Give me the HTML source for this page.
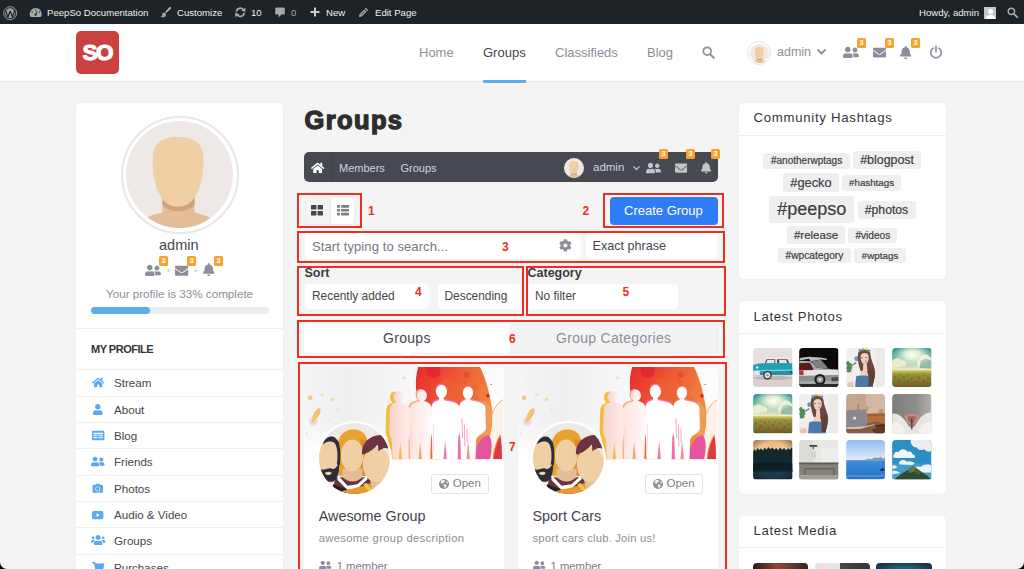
<!DOCTYPE html>
<html lang="en">
<head>
<meta charset="utf-8">
<title>Groups – PeepSo Documentation</title>
<style>
*{box-sizing:border-box;margin:0;padding:0}
html,body{width:1024px;height:569px;overflow:hidden;background:#f4f4f4;font-family:"Liberation Sans",sans-serif;color:#45454d}
#page{position:relative;width:1024px;height:569px;overflow:hidden;background:#f4f4f4}
.abs{position:absolute}
.t{position:absolute;white-space:nowrap;line-height:1}
svg{position:absolute;display:block;overflow:visible}

/* ---------- WP admin bar ---------- */
#wpbar{position:absolute;left:0;top:0;width:1024px;height:24px;background:#1d2327}
#wpbar .t{color:#f0f0f1;font-size:9.600px;top:8.200px}
#wpbar .dim{color:#a7aaad}

/* ---------- site header ---------- */
#hdr{position:absolute;left:0;top:24px;width:1024px;height:58px;background:#fff;border-bottom:1px solid #e6e6e6}
#logo{position:absolute;left:76px;top:7px;width:43px;height:43px;border-radius:5px;background:#cb4140}
#logo .t{color:#fff;font-weight:bold;font-size:22.500px;left:6.600px;top:10.700px;letter-spacing:-1.700px;-webkit-text-stroke:1.100px #fff}
.nav{color:#8e8e9a;font-size:13px;top:21.800px}
.nav.on{color:#45454d}
#navline{position:absolute;left:483px;top:56px;width:43px;height:3px;background:#5badf0;z-index:2}
.badge{position:absolute;width:9px;height:10px;border-radius:1.500px;background:#f6a32b;color:#fff;font-size:7.500px;line-height:10px;text-align:center;font-weight:bold}

/* ---------- cards ---------- */
.card{position:absolute;background:#fff;border-radius:5px;box-shadow:0 0 2px rgba(0,0,0,.04)}
.av{border-radius:50%;overflow:hidden;position:relative;width:100%;height:100%}
.av svg{position:absolute;left:0;top:0;width:100%;height:100%}
.hr{position:absolute;height:1px;background:#efefef}

/* ---------- left sidebar ---------- */
.menu{color:#45454d;font-size:11.600px;left:114px;margin-top:.8px}
.mi{fill:#5aa9ee}

/* ---------- main column ---------- */
#title{left:304.600px;top:108px;font-size:25.500px;font-weight:bold;color:#2d2d2d;letter-spacing:1.350px;-webkit-text-stroke:1.300px #2d2d2d}
#pbar{position:absolute;left:304px;top:152px;width:413.500px;height:30.300px;border-radius:5px;background:#46494f}
#pbar .t{color:#d4d4d9;font-size:11px;top:10.500px}
.rbox{position:absolute;border:2px solid #ee2e22}
.rnum{color:#ee2e22;font-weight:bold;font-size:12px}
.inp{position:absolute;background:#fff;border-radius:4px;height:25.500px}
.inp .t{left:7px;top:7.300px;font-size:11.900px;color:#45454d}
.lbl{font-weight:bold;font-size:12.500px;color:#3a3a42}

.gcard{position:absolute;top:367px;width:199.500px;height:220px;background:#fff;border-radius:5px 5px 0 0;overflow:hidden}
.gcard .cv{left:0;top:0;width:199.500px;height:92.300px}
.gav{position:absolute;top:421.100px;width:75.300px;height:75.300px;border-radius:50%;background:#fff;padding:2px}
.open{position:absolute;top:473.700px;width:58.500px;height:20.600px;border:1px solid #e4e4e4;border-radius:3px;background:#fff}
.open .t{left:21px;top:3.500px;font-size:11.500px;color:#808088}
.gname{font-size:14.400px;color:#45454d;top:508.500px}
.gdesc{font-size:11.300px;letter-spacing:.3px;color:#8e8e98;top:532.800px}
.gmem{font-size:11.300px;color:#7a7a84;top:561px}

/* ---------- right sidebar ---------- */
.wtitle{font-size:13.200px;letter-spacing:.66px;color:#33333b;left:753.500px}
.tag{position:absolute;background:#efefef;border-radius:3px;color:#3c3c44;text-align:center;white-space:nowrap;-webkit-text-stroke:.2px #3c3c44}
.ph{position:absolute;width:39.600px;height:39.400px;border-radius:4px;overflow:hidden}
.ph svg{left:0;top:0;width:100%;height:100%}
</style>
</head>
<body>
<div id="page">
<svg width="0" height="0" style="left:-10px;top:-10px"><defs>
<symbol id="i-friends" viewBox="0 0 640 512"><path d="M192 256c61.900 0 112-50.100 112-112S253.900 32 192 32 80 82.100 80 144s50.100 112 112 112zm76.800 32h-8.300c-20.800 10-43.900 16-68.500 16s-47.600-6-68.500-16h-8.300C51.600 288 0 339.600 0 403.200V432c0 26.500 21.500 48 48 48h288c26.500 0 48-21.500 48-48v-28.800c0-63.600-51.600-115.200-115.200-115.200zM480 256c53 0 96-43 96-96s-43-96-96-96-96 43-96 96 43 96 96 96zm48 32h-3.800c-13.900 4.800-28.600 8-44.200 8s-30.300-3.200-44.200-8H432c-20.400 0-39.200 5.900-55.700 15.400 24.400 26.300 39.700 61.200 39.700 99.800v38.400c0 2.200-.5 4.300-.6 6.400H592c26.500 0 48-21.500 48-48 0-61.900-50.100-112-112-112z"/></symbol>
<symbol id="i-mail" viewBox="0 0 512 512"><path d="M502.300 190.800c3.900-3.100 9.700-.2 9.700 4.700V400c0 26.500-21.500 48-48 48H48c-26.500 0-48-21.500-48-48V195.600c0-5 5.700-7.800 9.700-4.700 22.400 17.400 52.100 39.500 154.100 113.600 21.100 15.400 56.700 47.800 92.200 47.600 35.700.3 72-32.800 92.300-47.600 102-74.100 131.600-96.300 154-113.700zM256 320c23.200.4 56.600-29.200 73.400-41.400 132.700-96.300 142.800-104.700 173.400-128.700 5.800-4.500 9.200-11.500 9.200-18.900v-19c0-26.500-21.500-48-48-48H48C21.500 64 0 85.500 0 112v19c0 7.400 3.400 14.300 9.200 18.900 30.600 23.900 40.700 32.400 173.400 128.700 16.800 12.200 50.200 41.800 73.400 41.400z"/></symbol>
<symbol id="i-bell" viewBox="0 0 448 512"><path d="M224 512c35.300 0 64-28.700 64-64H160c0 35.300 28.700 64 64 64zm215.400-149.700c-19.300-20.800-55.500-52-55.500-154.300 0-77.700-54.500-139.900-127.900-155.200V32c0-17.700-14.300-32-32-32s-32 14.300-32 32v20.800C118.600 68.100 64.100 130.300 64.100 208c0 102.300-36.200 133.500-55.500 154.300-6 6.400-8.700 14.100-8.600 21.700.1 16.400 13 32 32.100 32h383.800c19.100 0 32-15.600 32.100-32 .1-7.600-2.600-15.300-8.600-21.700z"/></symbol>
<symbol id="i-home" viewBox="0 0 576 512"><path d="M280.400 148.300L96 300.100V464a16 16 0 0 0 16 16l112.100-.3a16 16 0 0 0 15.900-16V368a16 16 0 0 1 16-16h64a16 16 0 0 1 16 16v95.600a16 16 0 0 0 16 16.100L464 480a16 16 0 0 0 16-16V300L295.700 148.300a12.200 12.200 0 0 0-15.300 0zM571.600 251.500L488 182.600V44a12 12 0 0 0-12-12h-56a12 12 0 0 0-12 12v72.600L318.500 43a48 48 0 0 0-61 0L4.300 251.500a12 12 0 0 0-1.600 16.900l25.500 31a12 12 0 0 0 16.900 1.600l235.200-193.700a12.200 12.200 0 0 1 15.300 0L530.900 301a12 12 0 0 0 16.900-1.600l25.500-31a12 12 0 0 0-1.700-16.900z"/></symbol>
<symbol id="i-face" viewBox="0 0 100 100"><rect width="100" height="100" fill="#eee9e7"/><path d="M8,100 C13,92 22,88.500 34,85.500 L34,72 L64,72 L64,85.500 C76,88.500 85,92 90,100z" fill="#e3bd98"/><path d="M34,68 L64,68 L64,78 C58,86.500 40,86.500 34,78z" fill="#cfa37d"/><path d="M48.500,15 C64,15 72.500,21 72.500,36 C72.500,54 69,65 63,73 C59,78.500 53,80 48.500,80 C44,80 38,78.500 34,73 C28,65 25,54 25,36 C25,21 33,15 48.500,15z" fill="#f1cfa5"/></symbol>
<symbol id="g-cover" viewBox="0 0 200 93" preserveAspectRatio="none">
<defs>
<linearGradient id="cv-bg" x1="0" y1="0" x2="1" y2="0"><stop offset="0" stop-color="#f5f5f6"/><stop offset=".22" stop-color="#efeff1"/><stop offset=".5" stop-color="#f7f7f8"/><stop offset="1" stop-color="#fcfcfd"/></linearGradient>
<linearGradient id="cv-fade" x1="0" y1="0" x2="0" y2="1"><stop offset=".55" stop-color="#fff" stop-opacity="0"/><stop offset="1" stop-color="#fff" stop-opacity=".95"/></linearGradient>
<linearGradient id="cv-sun" x1="0" y1="0" x2="1" y2=".6"><stop offset="0" stop-color="#e9292f"/><stop offset=".45" stop-color="#ee5a34"/><stop offset="1" stop-color="#f29340"/></linearGradient>
<linearGradient id="cv-p1" x1="0" y1="0" x2="1" y2="0"><stop offset="0" stop-color="#f9d3cd"/><stop offset="1" stop-color="#fdeeea"/></linearGradient>
<linearGradient id="cv-p2" x1="0" y1="0" x2="1" y2="0"><stop offset="0" stop-color="#fbe3de"/><stop offset="1" stop-color="#fffafa"/></linearGradient>
</defs>
<rect width="200" height="93" fill="url(#cv-bg)"/>
<rect width="112" height="93" fill="url(#cv-fade)"/>
<!-- dots & comet -->
<circle cx="6.200" cy="31" r="2.500" fill="#f4c98a"/><circle cx="18.300" cy="28" r="1.300" fill="#f6d7a4"/><circle cx="28.500" cy="32.600" r="1.800" fill="#f6d3a0"/><circle cx="34" cy="42.500" r="1" fill="#f6d7a4"/><circle cx="9.600" cy="16.400" r=".8" fill="#f8e2bf"/><circle cx="100" cy="10.800" r="1.700" fill="#f3dccb"/>
<circle cx="9.300" cy="55" r="4.300" fill="#eadbe6"/><path d="M7.800,57 C7.600,49 11,42.500 15.200,41.200 C18.600,42.600 16.500,49.500 7.800,57z" fill="#f6c073"/>
<circle cx="25" cy="54" r="1" fill="#eedfe9"/><circle cx="2.600" cy="67.300" r="1.200" fill="#efe3ea"/>
<!-- sun blob -->
<path d="M114.500,0 C110.500,13 111.500,30 118,44 L118,93 L189,93 L189,46 C187,30 183,13 176.500,0 Z" fill="url(#cv-sun)"/>
<circle cx="130" cy="4" r="7" fill="#e2232b" opacity=".75"/><circle cx="163" cy="8" r="3" fill="#e8452f" opacity=".8"/><circle cx="171.500" cy="20" r="3.600" fill="#ea6a33" opacity=".7"/><circle cx="161.500" cy="14.500" r="2.600" fill="#ea5a30" opacity=".7"/>
<path d="M138,12 C148,9 154,20 164,23 C172,25 178,32 182,44 L146,44z" fill="#ee6436" opacity=".5"/>
<!-- right-side shapes -->
<path d="M180,93 L180,34 C184,36 187,40 189,46 L188.500,60 L186,72 L184,93z" fill="#f19a52"/>
<path d="M189,46 C191.500,39 195.500,34.500 200,32.500 L200,93 L186,93 L186,72 L188.500,60z" fill="#fdf2e8"/>
<path d="M188.800,47 C191.500,39.500 195.500,35 200,33" stroke="#f3a866" stroke-width=".9" fill="none"/>
<circle cx="184.300" cy="29" r="1.700" fill="#d3222c"/><circle cx="187.600" cy="17.500" r=".7" fill="#b0207a"/><circle cx="181" cy="6" r=".9" fill="#f2d8d8"/>
<path d="M171,93 C170,83 176,71 184.500,68.500 C189.500,72 188.500,84 186.500,93z" fill="#e4559e"/>
<path d="M189.500,93 C190.500,82 193.500,74 196.800,68.500 C198.200,76 198.600,86 198.400,93z" fill="#dc3a3e"/><path d="M189.500,93 C190.500,82 193.500,74 196.800,68.500" stroke="#f0913f" stroke-width="1.100" fill="none"/>
<!-- pink / yellow outlines behind people -->
<g transform="translate(-3.6,0.4)"><ellipse cx="94.7" cy="30.2" rx="5.0" ry="5.9" fill="#f4bb3e"/><path d="M92.6,34.4 L92.3,35.8 C89.2,36.8 87.0,37.2 86.0,42.9 L85.4,64.4 C85.8,69.4 88.2,71.4 88.2,76.4 L88.8,94 L104.2,94 L104.8,76.4 C104.8,71.4 106.4,69.4 106.8,64.4 L106.2,42.9 C105.2,37.2 100.2,36.8 97.1,35.8 L96.8,34.4 Z" fill="#f4bb3e"/></g><g transform="translate(-1.4,-1.0)"><ellipse cx="118.2" cy="28.7" rx="5.0" ry="5.9" fill="#f2a57c"/><path d="M116.1,32.9 L115.8,34.6 C112.7,35.6 107.0,36.0 106.0,41.7 L105.4,63.2 C105.8,68.2 105.8,70.2 105.8,75.2 L106.4,94 L126.6,94 L127.2,75.2 C127.2,70.2 128.2,68.2 128.6,63.2 L128.0,41.7 C127.0,36.0 123.7,35.6 120.6,34.6 L120.3,32.9 Z" fill="#f2a57c"/></g><g transform="translate(-0.4,-1.5)"><ellipse cx="137.8" cy="24.8" rx="5.6" ry="6.7" fill="#ea78a8"/><path d="M135.7,29.6 L135.4,33.4 C132.3,34.4 128.8,34.8 127.8,40.5 L127.2,62.0 C127.6,67.0 128.4,69.0 128.4,74.0 L129.0,94 L154.0,94 L154.6,74.0 C154.6,69.0 156.2,67.0 156.6,62.0 L156.0,40.5 C155.0,34.8 143.3,34.4 140.2,33.4 L139.9,29.6 Z" fill="#ea78a8"/></g><g transform="translate(0.5,-1.1)"><ellipse cx="164.3" cy="26.1" rx="5.1" ry="6.1" fill="#f08d8f"/><path d="M162.2,30.4 L161.9,33.4 C158.8,34.4 156.6,34.8 155.6,40.5 L155.0,62.0 C155.4,67.0 156.8,69.0 156.8,74.0 L157.4,94 L171.8,94 L172.4,74.0 C172.4,69.0 182.0,67.0 182.4,62.0 L181.8,40.5 C180.8,34.8 169.8,34.4 166.7,33.4 L166.4,30.4 Z" fill="#f08d8f"/></g>
<path d="M128,94 L129,72 L134,66 L136,94z" fill="#f3a04e"/><path d="M153,94 L154,58 L160,56 L161,94z" fill="#ec6fa5"/>
<ellipse cx="94.7" cy="30.2" rx="5.0" ry="5.9" fill="url(#cv-p1)"/><path d="M92.6,34.4 L92.3,35.8 C89.2,36.8 87.0,37.2 86.0,42.9 L85.4,64.4 C85.8,69.4 88.2,71.4 88.2,76.4 L88.8,94 L94.7,94 L96.5,76.4 L98.3,94 L104.2,94 L104.8,76.4 C104.8,71.4 106.4,69.4 106.8,64.4 L106.2,42.9 C105.2,37.2 100.2,36.8 97.1,35.8 L96.8,34.4 Z" fill="url(#cv-p1)"/><ellipse cx="118.2" cy="28.7" rx="5.0" ry="5.9" fill="url(#cv-p2)"/><path d="M116.1,32.9 L115.8,34.6 C112.7,35.6 107.0,36.0 106.0,41.7 L105.4,63.2 C105.8,68.2 105.8,70.2 105.8,75.2 L106.4,94 L114.7,94 L116.5,75.2 L118.3,94 L126.6,94 L127.2,75.2 C127.2,70.2 128.2,68.2 128.6,63.2 L128.0,41.7 C127.0,36.0 123.7,35.6 120.6,34.6 L120.3,32.9 Z" fill="url(#cv-p2)"/><ellipse cx="137.8" cy="24.8" rx="5.6" ry="6.7" fill="#fff"/><path d="M135.7,29.6 L135.4,33.4 C132.3,34.4 128.8,34.8 127.8,40.5 L127.2,62.0 C127.6,67.0 128.4,69.0 128.4,74.0 L129.0,94 L139.7,94 L141.5,74.0 L143.3,94 L154.0,94 L154.6,74.0 C154.6,69.0 156.2,67.0 156.6,62.0 L156.0,40.5 C155.0,34.8 143.3,34.4 140.2,33.4 L139.9,29.6 Z" fill="#fff"/><ellipse cx="164.3" cy="26.1" rx="5.1" ry="6.1" fill="#fff"/><path d="M162.2,30.4 L161.9,33.4 C158.8,34.4 156.6,34.8 155.6,40.5 L155.0,62.0 C155.4,67.0 156.8,69.0 156.8,74.0 L157.4,94 L162.8,94 L164.6,74.0 L166.4,94 L171.8,94 L172.4,74.0 C172.4,69.0 182.0,67.0 182.4,62.0 L181.8,40.5 C180.8,34.8 169.8,34.4 166.7,33.4 L166.4,30.4 Z" fill="#fff"/>
<path d="M158.200,52 L159,72 M160.800,58 L161.300,80 M163.400,62 L163.600,76" stroke="#ee7fa6" stroke-width=".7" fill="none"/>
<path d="M107.200,60 L107.600,80 M129.600,58 L130,84" stroke="#f6c6b8" stroke-width=".6" fill="none"/>
</symbol>
<symbol id="g-avatar" viewBox="0 0 100 100">
<rect width="100" height="100" fill="#eee9e7"/>
<!-- centre person hair back -->
<path d="M26,40 C24,18 36,9 48,9 C60,9 70,16 69,36 L70,74 L26,74z" fill="#e8a02e"/>
<path d="M58,22 L69,26 L70,74 L60,74z" fill="#dc8a2b"/>
<!-- clothes -->
<path d="M22,76 L72,76 L74,100 L20,100z" fill="#6e3340"/>
<path d="M20,86 L42,94 L38,100 L14,100z" fill="#23232b"/>
<path d="M26,73 L40,88 L54,86 L68,73 L68,79 L54,92 L40,94 L26,80z" fill="#fff"/>
<path d="M30,96 C45,92 60,90 72,84 L84,100 L30,100z" fill="#ea9a2c"/><path d="M62,86 L67,84 L76,96 L71,98z" fill="#f5c842"/>
<!-- centre neck + face -->
<path d="M33,64 L61,64 L61,76 C52,84 42,84 33,76z" fill="#e3bd98"/>
<ellipse cx="46.500" cy="45.500" rx="15.800" ry="22.500" fill="#f1cfa5"/>
<!-- left person -->
<path d="M0,28 L24,26 C30,34 30,58 27,66 L22,80 L0,80z" fill="#f1cfa5"/>
<path d="M10,84 L24,76 L22,66 L4,70z" fill="#dcb590"/>
<path d="M6,28 C10,18 22,14 28,28 C31,40 30,52 29,60 L25,58 C27,46 26,34 22,28 C16,24 10,26 6,30z" fill="#2b2d3a"/>
<path d="M2,64 C8,68 12,62 18,64 C22,66 26,60 28,56 C29,68 26,78 20,82 C12,84 6,78 2,70z" fill="#2b2d3a"/>
<path d="M8,70 C12,68 16,68 18,70 C16,74 10,74 8,70z" fill="#f1cfa5"/>
<!-- right person -->
<path d="M72,78 L90,78 L90,96 L74,94z" fill="#e3bd98"/>
<ellipse cx="80.500" cy="58" rx="19" ry="25" fill="#f1cfa5"/>
<path d="M60,44 C60,28 70,18 86,17 C92,18 96,26 97,36 C92,34 88,36 83,40 C84,34 82,30 82,30 C76,38 68,42 62,44z" fill="#6e3340"/>
</symbol>
<symbol id="ph-car1" viewBox="0 0 40 40"><rect width="40" height="40" fill="#e7dfde"/><rect y="27.500" width="40" height="12.500" fill="#d9d1d1"/>
<ellipse cx="20" cy="30.500" rx="20" ry="2" fill="#bdb4b4"/>
<path d="M10.500,15.800 C11.500,11 13,9.800 16,9.700 L33,9.700 C36,9.900 37.500,12 38.500,15.800z" fill="#f1ece2"/>
<path d="M11.800,15.700 L13.400,11.300 L22.600,11.300 L22.600,15.700z M24.200,11.300 L35,11.300 L37,15.700 L24.200,15.700z" fill="#4a5254"/><path d="M13.300,15.200 L14.400,12.200 L21.600,12.200 L21.600,15.200z M26.500,12.200 L33.500,12.200 L34.800,15.200 L26.500,15.200z" fill="#dfe7e6"/>
<path d="M0,17.200 C3,15.800 8,15.500 12,15.500 L40,15.500 L40,27.200 L0,27.600z" fill="#1f9fb6"/>
<path d="M0,22.600 L40,21.800 L40,23.200 L0,24z" fill="#7fd0dc"/><path d="M0,24 L40,23.200 L40,27.200 L0,27.600z" fill="#2a8da2"/>
<path d="M0,23.500 L6.500,23.200 L7,27.600 L0,28z" fill="#e8e8ea"/><circle cx="4.200" cy="19.800" r="1.300" fill="#f4f4f0"/>
<circle cx="14.600" cy="27.600" r="4.300" fill="#2e2a2b"/><circle cx="14.600" cy="27.600" r="3" fill="#e6e2e0"/><circle cx="14.600" cy="27.600" r="1.300" fill="#9a9696"/>
<path d="M36,24 A4.300,4.300 0 0 1 40,27.500 L40,24z" fill="#2e2a2b"/></symbol>
<symbol id="ph-car2" viewBox="0 0 40 40"><rect width="40" height="40" fill="#0b0b0c"/>
<path d="M0,12 L1.500,10 L10,8.800 L22,9.600 L28.500,10.800 L28,12.200 L22,11.600 L12,13.500 L10,10.800 L2,12.500z" fill="#b9bbbb"/>
<path d="M0,13 L12,13.500 L18,20 L40,22 L40,37 L0,37z" fill="#a9abab"/>
<path d="M0,15.500 L11,15 L14.500,21 L12.500,27 L0,27z" fill="#5a1c1a"/><path d="M13,13.500 L22,11.600 L30,21 L17,20z" fill="#7b7f80"/>
<path d="M0,22.500 L40,22 L40,27.500 L0,28.500z" fill="#e3e5e5"/><rect x="0" y="22.800" width="4.500" height="4.800" fill="#b8302a"/>
<path d="M0,28.500 L40,27.500 L40,33 L0,34z" fill="#8d9090"/>
<circle cx="21.200" cy="32" r="5.600" fill="#1c1c1e"/><circle cx="21.200" cy="32" r="3.400" fill="#9b9d9d"/><circle cx="21.200" cy="32" r="1.400" fill="#d5d5d5"/>
<path d="M33,30 L40,29.500 L40,33.500 L33,34z" fill="#4a4c4c"/>
<rect y="36.500" width="40" height="3.500" fill="#2a2a2b"/></symbol>
<symbol id="ph-girl" viewBox="0 0 40 40"><rect width="40" height="40" fill="#f0efed"/><rect x="30" width="10" height="40" fill="#ebeae8"/>
<path d="M.5,14 C2,12.500 3.500,13.500 3.500,15.500 C5,14.500 6.500,15.500 5.500,17.500 L9.500,14.500 C10.500,14.300 10.800,15.500 10,16 L5.500,18.500 C7,19.500 6.500,21.500 5,21.500 C6,23 5,25 3.200,24.500 C1.500,25.500 0,24 1,22 C-.5,20.500 0,18.500 1.500,18.500 C0,17 -.3,15 .5,14z" fill="#4f8a5e"/>
<circle cx="10.800" cy="11" r="2.500" fill="#6f92d2"/>
<path d="M0,40 C0,32 3,25.500 10,24.500 L12,40z" fill="#f3ece8"/><path d="M.5,40 L1.500,35 L7,34.500 L8,40z" fill="#e6c6b6"/>
<path d="M12,9 C11.500,3 15,1 18.500,1.200 C22.500,1 24.800,3.500 25,8 C25.500,13 29.500,19 29.500,25 C29.500,31 27.500,36 26.500,38.500 L22,38.500 C23,33 22,27 21,23 L15,23.500 C13.500,21 11.800,14 12,9z" fill="#6b4a3d"/>
<path d="M14.700,9 C14.700,6.200 16.500,5 18.800,5 C21.300,5 23,6.500 23,9.500 C23,13.500 21.200,16.600 18.800,16.600 C16.500,16.600 14.700,13 14.700,9z" fill="#edd1c5"/>
<path d="M19.200,13.300 C19.900,12.900 20.800,12.900 21.400,13.400 C20.800,14.300 19.800,14.300 19.200,13.300z" fill="#d6405a"/>
<path d="M15.200,10 L17.200,9.600 M19.600,9.600 L21.700,10" stroke="#6b4a3d" stroke-width=".7"/>
<path d="M13,40 C12.500,32 14,25 17,22.500 L17.500,16 L21,16 L21.500,22 C24.500,24 25.500,29 25.500,40z" fill="#ecd0c2"/>
<path d="M9.200,40 C9.400,35 10,30.500 10.500,28.500 C14,27.500 22,27.800 25.500,29 C26.500,32 27,36 27.200,40z" fill="#4a79aa"/>
<path d="M21,23 C23,27 23.500,33 22.500,38.500 L26.800,38.500 C29,33 29.500,27 28,21z" fill="#5e4034"/>
<circle cx="14" cy="2.500" r="1.500" fill="#6c92cf"/><circle cx="17.200" cy="1.300" r="1.300" fill="#9db86a"/><circle cx="20.500" cy="1.300" r="1.300" fill="#e6d35a"/><circle cx="23.300" cy="2.800" r="1.400" fill="#6c92cf"/></symbol>
<symbol id="ph-field" viewBox="0 0 40 40"><defs><linearGradient id="fs" x1="0" y1="0" x2="0" y2="1"><stop offset="0" stop-color="#279390"/><stop offset=".32" stop-color="#7cc0ad"/><stop offset=".56" stop-color="#f4eec2"/></linearGradient><radialGradient id="fsun" cx=".52" cy=".28" r=".5"><stop offset="0" stop-color="#fffef2"/><stop offset=".35" stop-color="#fffbe0" stop-opacity=".85"/><stop offset="1" stop-color="#fffbe6" stop-opacity="0"/></radialGradient><linearGradient id="fg" x1="0" y1="0" x2="0" y2="1"><stop offset="0" stop-color="#d8cf72"/><stop offset=".2" stop-color="#9a9a3e"/><stop offset="1" stop-color="#55662a"/></linearGradient></defs>
<rect width="40" height="40" fill="url(#fs)"/>
<path d="M0,13 C3,9 8,10 10,13 C13,12 15,15 14,18 L0,20z" fill="#f3efcf" opacity=".9"/><path d="M27,12 C29,6 36,5 38,9 C40,9 40,12 40,13 L40,20 L26,19 C25,16 25,13 27,12z" fill="#eef0d6" opacity=".9"/>
<path d="M29,13 C33,10 38,11 40,14 L40,21 L28,20z" fill="#5f9f8a" opacity=".6"/>
<rect width="40" height="24" fill="url(#fsun)"/>
<rect y="22.500" width="40" height="17.500" fill="url(#fg)"/>
<g fill="#c83c28"><circle cx="3" cy="30" r="1.100"/><circle cx="7.500" cy="33" r="1.300"/><circle cx="12" cy="29.500" r="1"/><circle cx="15.500" cy="34.500" r="1.300"/><circle cx="20" cy="31" r="1.100"/><circle cx="24" cy="35" r="1.300"/><circle cx="27.500" cy="30" r="1"/><circle cx="32" cy="33.500" r="1.300"/><circle cx="36.500" cy="30.500" r="1.100"/><circle cx="5" cy="37" r="1.300"/><circle cx="11" cy="37.500" r="1.200"/><circle cx="19" cy="37.500" r="1.300"/><circle cx="29" cy="37.500" r="1.300"/><circle cx="36" cy="36.500" r="1.300"/><circle cx="23" cy="28.500" r=".8"/><circle cx="16" cy="28" r=".7"/><circle cx="33" cy="28" r=".8"/><circle cx="8" cy="28" r=".7"/></g></symbol>
<symbol id="ph-laptop" viewBox="0 0 40 40"><rect width="40" height="40" fill="#c6a48e"/><rect x="20" width="20" height="20" fill="#d4b8a4"/>
<rect x="11.500" y="10" width="1.800" height="6" fill="#8f8a86"/><rect x="20.500" y="12.500" width="2.200" height="5" fill="#c59a62"/><rect x="33" y="15.500" width="5" height="4" fill="#b89a78"/>
<path d="M21,20 L40,19.500 L40,23 L21,23z" fill="#9a5f36"/><path d="M21,23 L40,23 L40,30 L21,31z" fill="#b5703e"/>
<path d="M0,34 L30,28 L40,30 L40,40 L0,40z" fill="#8a5a3e"/><path d="M26,36 L40,31 L40,40 L30,40z" fill="#5e3a2a"/>
<path d="M0,16.500 L20.500,15.600 L21.300,32.500 L0,33.800z" fill="#8b8790"/><path d="M0,33.800 L21.300,32.500 L29,30.500 L28,31.800 L14,35.500 L0,35.500z" fill="#c3c1c6"/>
<circle cx="8.700" cy="24.600" r="1.500" fill="#e6e4ea"/><path d="M29.500,32 L38,30.500 L38.500,32 L30.500,33.800z" fill="#3a2a26"/></symbol>
<symbol id="ph-cat" viewBox="0 0 40 40"><defs><linearGradient id="ct" x1="0" y1="0" x2="1" y2="0"><stop offset="0" stop-color="#7f7d79"/><stop offset=".6" stop-color="#8f8d89"/><stop offset="1" stop-color="#b3b0ab"/></linearGradient></defs>
<rect width="40" height="40" fill="url(#ct)"/>
<path d="M0,20 C6,19 10,23 14,28 C16,32 18,34 20,34.500 C22,34 24,32 26,28 C30,22 35,18 40,19 L40,40 L0,40z" fill="#e9e5e0"/>
<path d="M0,30 C5,27 10,30 14,36 L12,40 L0,40z" fill="#f4f1ee"/><path d="M40,28 C35,27 30,31 27,37 L29,40 L40,40z" fill="#f4f1ee"/>
<path d="M12.500,22 C15,19.800 25,19.800 27.500,22 C27.500,26 24,30 20.500,31 L19.500,31 C16,30 12.500,26 12.500,22z" fill="#c98f78"/>
<path d="M15.500,23 C17.500,22 22.500,22 24.500,23 C24,26.500 22,29.500 20.500,30.200 L19.500,30.200 C18,29.500 16,26.500 15.500,23z" fill="#a8685a"/>
<path d="M19.300,25 L20.700,25 L20.500,36 L19.500,36z" fill="#4a3834"/></symbol>
<symbol id="ph-forest" viewBox="0 0 40 40"><defs><linearGradient id="fo" x1="0" y1="0" x2="0" y2="1"><stop offset="0" stop-color="#eeb277"/><stop offset=".22" stop-color="#f0c898"/><stop offset=".3" stop-color="#c9b79a"/></linearGradient><radialGradient id="fov" cx=".5" cy=".5" r=".75"><stop offset=".6" stop-color="#000" stop-opacity="0"/><stop offset="1" stop-color="#000" stop-opacity=".45"/></radialGradient></defs>
<rect width="40" height="40" fill="url(#fo)"/>
<path d="M0,12 L1.500,9.500 L3,11.500 L4.500,8 L6.500,10.500 L8,8.500 L10,11 L11.500,7.500 L13.500,10 L15.500,7 L17.500,9.500 L19.500,7.500 L21.500,10 L23.500,8 L25.500,10.500 L27.500,7.500 L29.500,10 L31.500,8 L33.500,10.500 L35.500,8.500 L37.500,10 L39,7.500 L40,9 L40,32 L0,32z" fill="#12292d"/>
<path d="M0,24 C10,22 30,22 40,24 L40,32 L0,32z" fill="#0d1f24"/>
<rect y="30.500" width="40" height="9.500" fill="#1b3a4a"/><rect y="30.500" width="40" height="2" fill="#142c36"/>
<rect width="40" height="40" fill="url(#fov)"/></symbol>
<symbol id="ph-wall" viewBox="0 0 40 40"><rect width="40" height="40" fill="#e7e7e6"/><rect x="0" y="0" width="14" height="23" fill="#dcdcdb"/><rect x="22" y="8" width="18" height="15" fill="#ededec"/>
<rect x="10.500" y="5" width="8" height="1.800" rx=".5" fill="#3c3c3c"/><rect x="13.800" y="6.800" width="1.300" height="2.500" fill="#5a5a5a"/><rect x="12" y="12" width="5" height="6" fill="#d2d2d1"/>
<rect y="23" width="40" height="17" fill="#858079"/><rect y="23" width="40" height="1.600" fill="#5e5a55"/>
<rect x="5" y="28.500" width="31" height="1.300" fill="#625e59"/><rect x="5" y="29.800" width="1.300" height="6" fill="#625e59"/><rect x="34.700" y="29.800" width="1.300" height="6" fill="#625e59"/>
<rect y="35.500" width="40" height="4.500" fill="#a29d96"/></symbol>
<symbol id="ph-sea" viewBox="0 0 40 40"><defs><linearGradient id="se1" x1="0" y1="0" x2="0" y2="1"><stop offset="0" stop-color="#8fbcf0"/><stop offset="1" stop-color="#e4eefa"/></linearGradient><linearGradient id="se2" x1="0" y1="0" x2="0" y2="1"><stop offset="0" stop-color="#3f8edb"/><stop offset="1" stop-color="#2670c4"/></linearGradient></defs>
<rect width="40" height="21" fill="url(#se1)"/><rect y="20.500" width="40" height="19.500" fill="url(#se2)"/>
<path d="M0,20.500 L18,20.500 L22,19 L26,19.300 L29,17.800 L33,18.200 L35,17 L36.500,18.500 L40,18.300 L40,21 L0,21z" fill="#8696ad"/>
<path d="M0,36 C10,34.500 30,37 40,35 L40,37 C30,39 10,36.500 0,38z" fill="#5a9be0" opacity=".7"/>
<path d="M34.500,29.500 L39,29.500 L38.500,31.300 L35,31.300z M36.500,28 L37.500,28 L37.500,29.500 L36.500,29.500z" fill="#16253d"/></symbol>
<symbol id="ph-sky" viewBox="0 0 40 40"><rect width="40" height="40" fill="#2a8fc2"/><rect y="24" width="40" height="16" fill="#5aa9cf" opacity=".6"/>
<path d="M19,0 L40,0 L40,11 C37,13 34,11.500 33,9.500 C30,11 26,10 25,7.500 C21,8 18.500,4 19,0z" fill="#e9eef3"/>
<path d="M2,15 C2,12 5,11.500 6.500,12.500 C8,8.500 14,8.500 15.500,12 C18,11 21,12.500 21,15 C23.500,15 24.500,17.500 22,18.200 L3,18.200 C0.500,18 0.500,15.500 2,15z" fill="#f4f7f9"/>
<path d="M8,21.500 C10,19.500 14,20 15,22 C18,21 22,22 23,24 L20,25.500 L9,25 C6.500,24.500 6.500,22.500 8,21.500z" fill="#eef2f5"/>
<path d="M22,30 C23,27 27,26 29,27.500 C31,24.500 37,24 40,26 L40,33 L24,33 C21.500,33 21,31 22,30z" fill="#f1f4f7"/>
<path d="M0,26 C2.500,25 5,26.500 5,28.500 L0,29.500z M0,31.500 C3,30.500 7,31.500 8,33.500 L0,35z" fill="#e8eef2"/>
<path d="M2,40 L10,34 L16,30.500 L21,26.500 L25,29 L30,32.500 L36,36.500 L40,40z" fill="#2f4a2e"/><path d="M16,30.500 L21,26.500 L25,29 L22,32 L18,33.500z" fill="#5f7a45"/><path d="M22,32 L25,29 L30,32.500 L27,36z" fill="#41603a"/></symbol>
</defs></svg>

<!-- ================= WP ADMIN BAR ================= -->
<div id="wpbar">
  <svg style="left:3px;top:5.500px" width="14.400" height="14.400" viewBox="0 0 20 20"><circle cx="10" cy="10" r="9" fill="none" stroke="#9ca1a7" stroke-width="1.300"/><circle cx="10" cy="10" r="7" fill="#9ca1a7"/><path d="M3.800 6.800l3.100 8.600 2.300-6.400 .8-2.200m0 0l3.100 8.600 2.600-7.400c.3-1 .2-1.700-.2-2.300" fill="none" stroke="#1d2327" stroke-width="1.700" stroke-linejoin="round"/></svg>
  <svg style="left:28.500px;top:5.500px" width="13.400" height="13.400" viewBox="0 0 20 20"><path d="M10 3a9 9 0 0 0-9 9c0 1.6.4 3.100 1.200 4.400h15.600A9 9 0 0 0 10 3zm0 2.200a1 1 0 1 1 0 2 1 1 0 0 1 0-2zM4.500 8a1 1 0 1 1 0 2 1 1 0 0 1 0-2zm11 0a1 1 0 1 1 0 2 1 1 0 0 1 0-2zm-2.300-1.700l-2 5.500a1.700 1.700 0 1 1-1.600-.6z" fill="#a7aaad"/></svg>
  <span class="t" style="left:47px">PeepSo Documentation</span>
  <svg style="left:160px;top:6px" width="12" height="12" viewBox="0 0 20 20"><path d="M18.300 1.700c-.7-.7-2-.5-3 .5l-7 7.600 2 2 7.500-7c1-1 1.200-2.400.5-3.100zM6.900 11c-1.700 0-3 1.300-3 3 0 1.700-1.400 3-2.900 3.400 1.200 1 2.700 1.400 4.300 1.400 2.700 0 4.600-2 4.600-4.600 0-1.700-1.300-3.200-3-3.200z" fill="#a7aaad"/></svg>
  <span class="t" style="left:177px">Customize</span>
  <svg style="left:234px;top:6.200px" width="12.600" height="12.600" viewBox="0 0 20 20"><path d="M3.800,9 A6.300,6.300 0 0 1 15,6" stroke="#a7aaad" stroke-width="2.700" fill="none"/><path d="M18.300,2.600 L18,9.600 L11.600,7z" fill="#a7aaad"/><path d="M16.200,11 A6.300,6.300 0 0 1 5,14" stroke="#a7aaad" stroke-width="2.700" fill="none"/><path d="M1.700,17.400 L2,10.400 L8.400,13z" fill="#a7aaad"/></svg>
  <span class="t" style="left:251px">10</span>
  <svg style="left:275px;top:7px" width="10" height="11" viewBox="0 0 20 22"><path d="M2 1h16a1.500 1.500 0 0 1 1.500 1.500v11A1.500 1.500 0 0 1 18 15h-5l-6 6v-6H2A1.500 1.500 0 0 1 .5 13.500v-11A1.500 1.500 0 0 1 2 1z" fill="#a7aaad"/></svg>
  <span class="t dim" style="left:291px">0</span>
  <svg style="left:310px;top:7px" width="10" height="10" viewBox="0 0 20 20"><path d="M8 1h4v7h7v4h-7v7H8v-7H1V8h7z" fill="#c8cacd"/></svg>
  <span class="t" style="left:326px">New</span>
  <svg style="left:358px;top:6.500px" width="11" height="11" viewBox="0 0 20 20"><path d="M14.300,1.500 L18.500,5.700 L16.600,7.600 L12.400,3.400z M11.300,4.500 L15.500,8.700 L6.800,17.400 L1.600,18.400 L2.600,13.200z" fill="#a7aaad"/><path d="M5,13.500 L11.300,7.200 L12.800,8.700 L6.500,15z" fill="#1d2327" opacity=".55"/></svg>
  <span class="t" style="left:375px">Edit Page</span>
  <span class="t" style="left:919px">Howdy, admin</span>
  <div class="abs" style="left:984px;top:7px;width:12px;height:12px;background:#c6c6c6;overflow:hidden"><div class="abs" style="left:3.500px;top:2px;width:5px;height:5px;border-radius:50%;background:#fff"></div><div class="abs" style="left:1.500px;top:7.500px;width:9px;height:8px;border-radius:4px 4px 0 0;background:#fff"></div></div>
  <svg style="left:1007px;top:7px" width="11" height="11" viewBox="0 0 20 20"><circle cx="8" cy="8" r="5.800" fill="none" stroke="#a7aaad" stroke-width="2.800"/><path d="M12.500 12.500l6 6" stroke="#a7aaad" stroke-width="3.200" stroke-linecap="round"/></svg>
</div>

<!-- ================= SITE HEADER ================= -->
<div id="hdr">
  <div id="logo"><span class="t">SO</span></div>
  <span class="t nav" style="left:419px">Home</span>
  <span class="t nav on" style="left:483px">Groups</span>
  <span class="t nav" style="left:555px">Classifieds</span>
  <span class="t nav" style="left:647px">Blog</span>
  <div id="navline"></div>
</div>

<!-- header right cluster -->
<svg style="left:702px;top:46px" width="13" height="13" viewBox="0 0 20 20"><circle cx="8" cy="8" r="6" fill="none" stroke="#8e8e9a" stroke-width="2.600"/><path d="M12.600 12.600l5.600 5.600" stroke="#8e8e9a" stroke-width="3" stroke-linecap="round"/></svg>
<div class="abs" style="left:747px;top:41px;width:24px;height:24px;border-radius:50%;border:1px solid #e4e4e4;background:#fff;padding:1.500px"><div class="av"><svg viewBox="0 0 100 100"><use href="#i-face"/></svg></div></div>
<span class="t" style="left:777px;top:46px;font-size:12.500px;color:#8e8e9a">admin</span>
<svg style="left:817px;top:49px" width="9" height="6" viewBox="0 0 9 6"><path d="M1 1l3.500 3.500L8 1" fill="none" stroke="#8e8e9a" stroke-width="1.800" stroke-linecap="round" stroke-linejoin="round"/></svg>
<svg style="left:843px;top:46px" width="16" height="12.800" fill="#8e8e9a"><use href="#i-friends"/></svg><div class="badge" style="left:857px;top:38px">3</div>
<svg style="left:873px;top:46px" width="13" height="13" fill="#8e8e9a"><use href="#i-mail"/></svg><div class="badge" style="left:885px;top:38px">3</div>
<svg style="left:900px;top:46px" width="11.400" height="13" fill="#8e8e9a"><use href="#i-bell"/></svg><div class="badge" style="left:911px;top:38px">3</div>
<svg style="left:929px;top:45px" width="14" height="14" viewBox="0 0 20 20"><path d="M6 4.500A7.500 7.500 0 1 0 14 4.500" fill="none" stroke="#8e8e9a" stroke-width="2.400" stroke-linecap="round"/><path d="M10 1.500v8" stroke="#8e8e9a" stroke-width="2.400" stroke-linecap="round"/></svg>

<!-- ================= LEFT SIDEBAR ================= -->
<div class="card" id="lside" style="left:76px;top:103px;width:207px;height:480px"></div>
<div class="abs" style="left:120.500px;top:115.500px;width:118px;height:118px;border-radius:50%;border:2px solid #e7e7e7;background:#fff;padding:3.500px"><div class="av"><svg viewBox="0 0 100 100"><use href="#i-face"/></svg></div></div>
<span class="t" style="left:159px;top:237.800px;font-size:14.500px;color:#45454d">admin</span>
<svg style="left:145px;top:263.500px" width="16" height="12.800" fill="#8e8e9a"><use href="#i-friends"/></svg><div class="badge" style="left:159px;top:256px">3</div>
<div class="abs" style="left:167px;top:268.500px;width:3px;height:3px;border-radius:50%;background:#d9d9df"></div>
<svg style="left:175px;top:263.500px" width="13.500" height="13.500" fill="#8e8e9a"><use href="#i-mail"/></svg><div class="badge" style="left:187px;top:256px">3</div>
<div class="abs" style="left:194px;top:268.500px;width:3px;height:3px;border-radius:50%;background:#d9d9df"></div>
<svg style="left:202.500px;top:263px" width="11.600" height="13.300" fill="#8e8e9a"><use href="#i-bell"/></svg><div class="badge" style="left:214px;top:256px">3</div>
<span class="t" style="left:106px;top:288px;font-size:11.650px;color:#8e8e9a">Your profile is 33% complete</span>
<div class="abs" style="left:90.500px;top:306.500px;width:178px;height:7px;border-radius:4px;background:#ececec"><div class="abs" style="left:0;top:0;width:59px;height:7px;border-radius:4px;background:#5badf0"></div></div>
<div class="hr" style="left:76px;top:328px;width:207px"></div>
<span class="t" style="left:91px;top:343.500px;font-size:11px;letter-spacing:-.5px;font-weight:bold;color:#33333b">MY PROFILE</span>
<div class="hr" style="left:76px;top:369.2px;width:207px"></div>
<svg class="mi" style="left:91.500px;top:377.2px" width="12.400" height="11" ><use href="#i-home"/></svg>
<span class="t menu" style="top:376.5px">Stream</span>
<div class="hr" style="left:76px;top:395.6px;width:207px"></div>
<svg class="mi" style="left:93px;top:403.5px" width="9.600" height="11" viewBox="0 0 448 512"><path d="M224 256c70.700 0 128-57.300 128-128S294.700 0 224 0 96 57.300 96 128s57.300 128 128 128zm89.600 32h-16.700c-22.200 10.200-46.900 16-72.900 16s-50.600-5.800-72.900-16h-16.700C60.200 288 0 348.200 0 422.400V464c0 26.500 21.500 48 48 48h352c26.500 0 48-21.500 48-48v-41.600c0-74.200-60.200-134.400-134.400-134.400z"/></svg>
<span class="t menu" style="top:402.8px">About</span>
<div class="hr" style="left:76px;top:421.9px;width:207px"></div>
<svg class="mi" style="left:91.500px;top:429.9px" width="12.400" height="11" viewBox="0 0 576 512"><path d="M528 32H48C21.500 32 0 53.500 0 80v352c0 26.500 21.500 48 48 48h480c26.500 0 48-21.500 48-48V80c0-26.500-21.500-48-48-48zM64 128h448v64H64zm0 112h192v48H64zm0 96h192v48H64zm448 48H304v-48h208zm0-96H304v-48h208z"/></svg>
<span class="t menu" style="top:429.2px">Blog</span>
<div class="hr" style="left:76px;top:448.2px;width:207px"></div>
<svg class="mi" style="left:91px;top:456.2px" width="13.750" height="11"><use href="#i-friends"/></svg>
<span class="t menu" style="top:455.5px">Friends</span>
<div class="hr" style="left:76px;top:474.6px;width:207px"></div>
<svg class="mi" style="left:92px;top:482.6px" width="11.500" height="10.500" viewBox="0 0 512 512"><path d="M512 144v288c0 26.500-21.500 48-48 48H48c-26.500 0-48-21.500-48-48V144c0-26.500 21.500-48 48-48h88l12.300-32.900c7-18.700 24.900-31.100 44.900-31.100h125.500c20 0 37.900 12.400 44.900 31.100L376 96h88c26.500 0 48 21.500 48 48zM376 288c0-66.200-53.800-120-120-120s-120 53.800-120 120 53.800 120 120 120 120-53.800 120-120zm-32 0c0 48.500-39.500 88-88 88s-88-39.500-88-88 39.500-88 88-88 88 39.500 88 88z"/></svg>
<span class="t menu" style="top:481.9px">Photos</span>
<div class="hr" style="left:76px;top:500.9px;width:207px"></div>
<svg class="mi" style="left:91.800px;top:510.5px" width="11.400" height="8.200" viewBox="0 0 26 20" preserveAspectRatio="none"><path d="M4 0h18a4 4 0 0 1 4 4v12a4 4 0 0 1-4 4H4a4 4 0 0 1-4-4V4a4 4 0 0 1 4-4zm6.500 5.500v9l7-4.500z"/></svg>
<span class="t menu" style="top:508.2px">Audio &amp; Video</span>
<div class="hr" style="left:76px;top:527.3px;width:207px"></div>
<svg class="mi" style="left:90.500px;top:535.3px" width="14.300" height="10" viewBox="0 0 640 448"><path d="M96 192c35.300 0 64-28.700 64-64s-28.700-64-64-64-64 28.700-64 64 28.700 64 64 64zm448 0c35.300 0 64-28.700 64-64s-28.700-64-64-64-64 28.700-64 64 28.700 64 64 64zm32 32h-64c-17.600 0-33.500 7.100-45.100 18.600 40.300 22.100 68.900 62 75.100 109.400h66c17.700 0 32-14.300 32-32v-32c0-35.300-28.700-64-64-64zm-256 0c61.900 0 112-50.100 112-112S381.900 0 320 0 208 50.100 208 112s50.100 112 112 112zm76.800 32h-8.300c-20.800 10-43.900 16-68.500 16s-47.600-6-68.500-16h-8.300C179.600 256 128 307.600 128 371.200V400c0 26.500 21.500 48 48 48h288c26.500 0 48-21.500 48-48v-28.800c0-63.600-51.600-115.200-115.200-115.200zm-223.700-13.400C161.500 231.100 145.600 224 128 224H64c-35.300 0-64 28.700-64 64v32c0 17.700 14.300 32 32 32h65.900c6.300-47.400 34.900-87.300 75.200-109.400z"/></svg>
<span class="t menu" style="top:534.6px">Groups</span>
<div class="hr" style="left:76px;top:553.6px;width:207px"></div>
<svg class="mi" style="left:91.500px;top:561.6px" width="12.400" height="11" viewBox="0 0 576 512"><path d="M528.100 301.300l47.300-208C578.800 78.300 567.400 64 552 64H159.200l-9.200-44.800C147.800 8 137.900 0 126.500 0H24C10.700 0 0 10.700 0 24v16c0 13.300 10.700 24 24 24h69.900l70.200 343.400C147.300 417.100 136 435.200 136 456c0 30.900 25.100 56 56 56s56-25.100 56-56c0-15.700-6.400-29.800-16.800-40h209.600C430.400 426.200 424 440.300 424 456c0 30.900 25.100 56 56 56s56-25.100 56-56c0-22.200-12.900-41.300-31.600-50.400l5.500-24.300c3.400-15-8-29.300-23.400-29.300H218.100l-6.500-32h293.100c11.200 0 20.900-7.800 23.400-18.700z"/></svg>
<span class="t menu" style="top:560.9px">Purchases</span>

<!-- ================= MAIN COLUMN ================= -->
<span class="t" id="title">Groups</span>

<div id="pbar">
  <div class="abs" style="left:0;top:0;width:28.500px;height:30.300px;border-right:1px solid #3f4248"></div>
  <svg style="left:7px;top:10px" width="13.300" height="11.800" fill="#fff"><use href="#i-home"/></svg>
  <span class="t" style="left:35px">Members</span>
  <span class="t" style="left:96.500px">Groups</span>
  <div class="abs" style="left:260px;top:5.500px;width:20px;height:20px"><div class="av"><svg viewBox="0 0 100 100"><use href="#i-face"/></svg></div></div>
  <span class="t" style="left:289px;top:10px;font-size:11.500px">admin</span>
  <svg style="left:329px;top:13.500px" width="7" height="5" viewBox="0 0 7 5"><path d="M.800.800l2.700 2.700L6.200.800" fill="none" stroke="#b9b9c0" stroke-width="1.300" stroke-linecap="round" stroke-linejoin="round"/></svg>
  <svg style="left:341.500px;top:10px" width="15" height="12" fill="#c4c4c9"><use href="#i-friends"/></svg><div class="badge" style="left:355px;top:-3px">3</div>
  <svg style="left:370.500px;top:10px" width="12.300" height="12.300" fill="#c4c4c9"><use href="#i-mail"/></svg><div class="badge" style="left:382px;top:-3px">3</div>
  <svg style="left:396.500px;top:10px" width="10.300" height="11.800" fill="#c4c4c9"><use href="#i-bell"/></svg><div class="badge" style="left:407px;top:-3px">3</div>
</div>

<!-- view toggle + create -->
<div class="abs" style="left:304.500px;top:197px;width:50px;height:27.500px;border-radius:4px;background:#fff;border:1px solid #ebebeb;overflow:hidden"><div class="abs" style="left:0;top:0;width:25px;height:27px;background:#f4f4f4;border-right:1px solid #e9e9e9"></div></div>
<svg style="left:311px;top:205px" width="12" height="10.500" viewBox="0 0 12 10.500" fill="#45454d"><rect x="0" y="0" width="5.400" height="4.600" rx=".6"/><rect x="6.600" y="0" width="5.400" height="4.600" rx=".6"/><rect x="0" y="5.900" width="5.400" height="4.600" rx=".6"/><rect x="6.600" y="5.900" width="5.400" height="4.600" rx=".6"/></svg>
<svg style="left:336.500px;top:205px" width="12" height="10.500" viewBox="0 0 12 10.500" fill="#7e7e8a"><rect x="0" y="0" width="3" height="2.700" rx=".4"/><rect x="4" y="0" width="8" height="2.700" rx=".4"/><rect x="0" y="3.900" width="3" height="2.700" rx=".4"/><rect x="4" y="3.900" width="8" height="2.700" rx=".4"/><rect x="0" y="7.800" width="3" height="2.700" rx=".4"/><rect x="4" y="7.800" width="8" height="2.700" rx=".4"/></svg>
<div class="rbox" style="left:297px;top:193px;width:64.500px;height:34.500px"></div>
<span class="t rnum" style="left:368px;top:205px">1</span>
<span class="t rnum" style="left:582.500px;top:205px">2</span>
<div class="abs" style="left:610px;top:196.500px;width:107.500px;height:28px;border-radius:4px;background:#2f7cf6"><span class="t" style="left:14px;top:7.300px;font-size:13px;color:#fff">Create Group</span></div>
<div class="rbox" style="left:603px;top:193px;width:121px;height:34.500px"></div>

<!-- search row -->
<div class="inp" style="left:305px;top:233px;width:275.500px"><span class="t" style="font-size:13px;letter-spacing:.1px;color:#767680;top:6.700px">Start typing to search...</span></div>
<svg style="left:559px;top:239px" width="12.800" height="12.800" viewBox="0 0 512 512" fill="#8e8e9a"><path d="M487.400 315.700l-42.600-24.600c4.300-23.200 4.300-47 0-70.200l42.600-24.600c4.900-2.800 7.100-8.600 5.500-14-11.100-35.600-30-67.800-54.700-94.600-3.800-4.100-10-5.100-14.800-2.300L380.800 110c-17.900-15.400-38.500-27.300-60.800-35.100V25.800c0-5.600-3.900-10.500-9.400-11.700-36.700-8.200-74.300-7.800-109.200 0-5.500 1.200-9.400 6.100-9.400 11.700V75c-22.200 7.900-42.800 19.800-60.800 35.100L88.700 85.500c-4.900-2.800-11-1.900-14.800 2.300-24.700 26.700-43.600 58.900-54.700 94.600-1.700 5.400.6 11.200 5.500 14L67.300 221c-4.300 23.200-4.300 47 0 70.200l-42.600 24.600c-4.900 2.800-7.100 8.600-5.500 14 11.100 35.600 30 67.800 54.700 94.600 3.800 4.100 10 5.100 14.800 2.300l42.600-24.600c17.900 15.400 38.500 27.300 60.800 35.100v49.200c0 5.600 3.900 10.500 9.400 11.700 36.700 8.200 74.300 7.800 109.200 0 5.500-1.200 9.400-6.100 9.400-11.700v-49.200c22.200-7.900 42.800-19.800 60.800-35.100l42.600 24.600c4.900 2.800 11 1.900 14.800-2.300 24.700-26.700 43.600-58.900 54.700-94.600 1.500-5.500-.7-11.300-5.600-14.100zM256 336c-44.100 0-80-35.900-80-80s35.900-80 80-80 80 35.900 80 80-35.900 80-80 80z"/></svg>
<div class="inp" style="left:585.500px;top:233px;width:131.500px"><span class="t" style="font-size:12.600px;top:7.100px">Exact phrase</span></div>
<div class="rbox" style="left:297px;top:230.500px;width:427.500px;height:32px"></div>
<span class="t rnum" style="left:502px;top:241px">3</span>

<!-- sort / category -->
<span class="t lbl" style="left:304.500px;top:266.500px">Sort</span>
<div class="inp" style="left:305px;top:283.500px;width:123.500px"><span class="t">Recently added</span></div>
<div class="inp" style="left:437.500px;top:283.500px;width:82px"><span class="t">Descending</span></div>
<div class="rbox" style="left:297px;top:266px;width:227px;height:50px"></div>
<span class="t rnum" style="left:415px;top:286px">4</span>
<span class="t lbl" style="left:527.500px;top:266.500px">Category</span>
<div class="inp" style="left:528px;top:283.500px;width:150px"><span class="t">No filter</span></div>
<div class="rbox" style="left:525.500px;top:266px;width:200.500px;height:50px"></div>
<span class="t rnum" style="left:622.500px;top:286px">5</span>

<!-- tabs -->
<div class="abs" style="left:304px;top:323.500px;width:413.500px;height:29px;border-radius:4px;background:#f3f3f3;border:1px solid #ececec"></div>
<div class="abs" style="left:304px;top:323.500px;width:206px;height:29px;border-radius:4px 0 0 4px;background:#fff"></div>
<div class="abs" style="left:402.500px;top:349px;width:7px;height:7px;background:#fff;transform:rotate(45deg)"></div>
<span class="t" style="left:383px;top:331px;font-size:14px;letter-spacing:.3px;color:#45454d">Groups</span>
<span class="t" style="left:556px;top:331px;font-size:14px;letter-spacing:.3px;color:#8e8e9a">Group Categories</span>
<div class="rbox" style="left:297px;top:320px;width:428px;height:37.500px"></div>
<span class="t rnum" style="left:509px;top:333px">6</span>

<!-- ================= GROUP CARDS ================= -->
<div class="gcard" style="left:304.2px"><svg class="cv" viewBox="0 0 200 93" preserveAspectRatio="none"><use href="#g-cover"/></svg></div>
<div class="gav" style="left:316.900px"><div class="av"><svg viewBox="0 0 100 100"><use href="#g-avatar"/></svg></div></div>
<div class="open" style="left:430.7px"><svg style="left:7px;top:4.500px" width="10" height="10" viewBox="0 0 20 20"><circle cx="10" cy="10" r="10" fill="#8e8e9a"/><path d="M6.500,1.500 L11,2.500 L12,5 L9,6.500 L8.500,9 L5.500,9.500 L3.500,7.500 L4,4z M10,10.500 L14,11 L15.500,13.500 L13,17.500 L11,18 L10.500,14.500 L9,12.500z M15,4 L18,7 L17.500,9.500 L15.500,8.500 L14.500,6z" fill="#fff" opacity=".9"/></svg><span class="t">Open</span></div>
<span class="t gname" style="left:318.7px">Awesome Group</span>
<span class="t gdesc" style="left:318.7px">awesome group description</span>
<svg style="left:318.7px;top:560px" width="12.500" height="10" fill="#8e8e9a"><use href="#i-friends"/></svg><span class="t gmem" style="left:336.7px">1 member</span>
<div class="gcard" style="left:518px"><svg class="cv" viewBox="0 0 200 93" preserveAspectRatio="none"><use href="#g-cover"/></svg></div>
<div class="gav" style="left:530.600px"><div class="av"><svg viewBox="0 0 100 100"><use href="#g-avatar"/></svg></div></div>
<div class="open" style="left:644.5px"><svg style="left:7px;top:4.500px" width="10" height="10" viewBox="0 0 20 20"><circle cx="10" cy="10" r="10" fill="#8e8e9a"/><path d="M6.500,1.500 L11,2.500 L12,5 L9,6.500 L8.500,9 L5.500,9.500 L3.500,7.500 L4,4z M10,10.500 L14,11 L15.500,13.500 L13,17.500 L11,18 L10.500,14.500 L9,12.500z M15,4 L18,7 L17.500,9.500 L15.500,8.500 L14.500,6z" fill="#fff" opacity=".9"/></svg><span class="t">Open</span></div>
<span class="t gname" style="left:532.5px">Sport Cars</span>
<span class="t gdesc" style="left:532.500px;letter-spacing:.18px">sport cars club. Join us!</span>
<svg style="left:532.5px;top:560px" width="12.500" height="10" fill="#8e8e9a"><use href="#i-friends"/></svg><span class="t gmem" style="left:550.5px">1 member</span>
<div class="rbox" style="left:298px;top:362px;width:429px;height:230px"></div>
<span class="t rnum" style="left:509px;top:441px">7</span>

<!-- ================= RIGHT SIDEBAR ================= -->
<div class="card" style="left:739px;top:103px;width:206.500px;height:176.300px"></div>
<span class="t wtitle" style="top:111.300px;letter-spacing:.72px">Community Hashtags</span>
<div class="hr" style="left:739px;top:135px;width:206.500px"></div>
<div class="tag" style="left:763.2px;top:153px;width:86.8px;height:15.8px;line-height:15.8px;font-size:10px">#anotherwptags</div>
<div class="tag" style="left:853px;top:151.2px;width:68.2px;height:18.3px;line-height:18.3px;font-size:12.4px">#blogpost</div>
<div class="tag" style="left:783.2px;top:173px;width:55.5px;height:19px;line-height:19px;font-size:12.8px">#gecko</div>
<div class="tag" style="left:841.8px;top:175px;width:59.5px;height:15.8px;line-height:15.8px;font-size:9.75px">#hashtags</div>
<div class="tag" style="left:769.2px;top:195.5px;width:85px;height:27px;line-height:27px;font-size:18px">#peepso</div>
<div class="tag" style="left:857.5px;top:200.5px;width:58px;height:18.3px;line-height:18.3px;font-size:12.2px">#photos</div>
<div class="tag" style="left:787px;top:226.2px;width:58px;height:18px;line-height:18px;font-size:11.5px">#release</div>
<div class="tag" style="left:848.2px;top:227.5px;width:49.3px;height:15.8px;line-height:15.8px;font-size:10.1px">#videos</div>
<div class="tag" style="left:778.2px;top:247.5px;width:72.5px;height:15.8px;line-height:15.8px;font-size:10.2px">#wpcategory</div>
<div class="tag" style="left:854px;top:247.5px;width:52.2px;height:15.8px;line-height:15.8px;font-size:9.85px">#wptags</div>
<div class="card" style="left:739px;top:301px;width:206.500px;height:192.500px"></div>
<span class="t wtitle" style="top:309.500px">Latest Photos</span>
<div class="hr" style="left:739px;top:333px;width:206.500px"></div>
<div class="ph" style="left:753px;top:347.8px"><svg viewBox="0 0 40 40"><use href="#ph-car1"/></svg></div>
<div class="ph" style="left:799.2px;top:347.8px"><svg viewBox="0 0 40 40"><use href="#ph-car2"/></svg></div>
<div class="ph" style="left:845.6px;top:347.8px"><svg viewBox="0 0 40 40"><use href="#ph-girl"/></svg></div>
<div class="ph" style="left:892px;top:347.8px"><svg viewBox="0 0 40 40"><use href="#ph-field"/></svg></div>
<div class="ph" style="left:753px;top:394.2px"><svg viewBox="0 0 40 40"><use href="#ph-field"/></svg></div>
<div class="ph" style="left:799.2px;top:394.2px"><svg viewBox="0 0 40 40"><use href="#ph-girl"/></svg></div>
<div class="ph" style="left:845.6px;top:394.2px"><svg viewBox="0 0 40 40"><use href="#ph-laptop"/></svg></div>
<div class="ph" style="left:892px;top:394.2px"><svg viewBox="0 0 40 40"><use href="#ph-cat"/></svg></div>
<div class="ph" style="left:753px;top:440.4px"><svg viewBox="0 0 40 40"><use href="#ph-forest"/></svg></div>
<div class="ph" style="left:799.2px;top:440.4px"><svg viewBox="0 0 40 40"><use href="#ph-wall"/></svg></div>
<div class="ph" style="left:845.6px;top:440.4px"><svg viewBox="0 0 40 40"><use href="#ph-sea"/></svg></div>
<div class="ph" style="left:892px;top:440.4px"><svg viewBox="0 0 40 40"><use href="#ph-sky"/></svg></div>
<div class="card" style="left:739px;top:515.500px;width:206.500px;height:80px"></div>
<span class="t wtitle" style="top:524.200px">Latest Media</span>
<div class="hr" style="left:739px;top:547px;width:206.500px"></div>
<div class="abs" style="left:753px;top:562.500px;width:55.400px;height:20px;border-radius:4px;background:linear-gradient(90deg,#2c1a16,#8a4a3c 45%,#3a2220)"></div>
<div class="abs" style="left:814.800px;top:562.500px;width:55px;height:20px;border-radius:4px;background:linear-gradient(90deg,#f3dde2 0,#f3dde2 22%,#e6e6e6 22%,#e6e6e6 46%,#454743 46%,#343634)"></div>
<div class="abs" style="left:876px;top:562.500px;width:55.500px;height:20px;border-radius:4px;background:radial-gradient(ellipse at 50% 60%,#3f8aa0,#16384a 80%)"></div>

<!-- window corner artefacts -->
<svg style="left:0;top:562px" width="7" height="7" viewBox="0 0 10 10"><path d="M0,10 L0,0 A10,10 0 0 0 10,10z" fill="#000"/></svg>
<svg style="left:1017px;top:562px" width="7" height="7" viewBox="0 0 10 10"><path d="M10,10 L10,0 A10,10 0 0 1 0,10z" fill="#000"/></svg>

</div>
</body>
</html>
